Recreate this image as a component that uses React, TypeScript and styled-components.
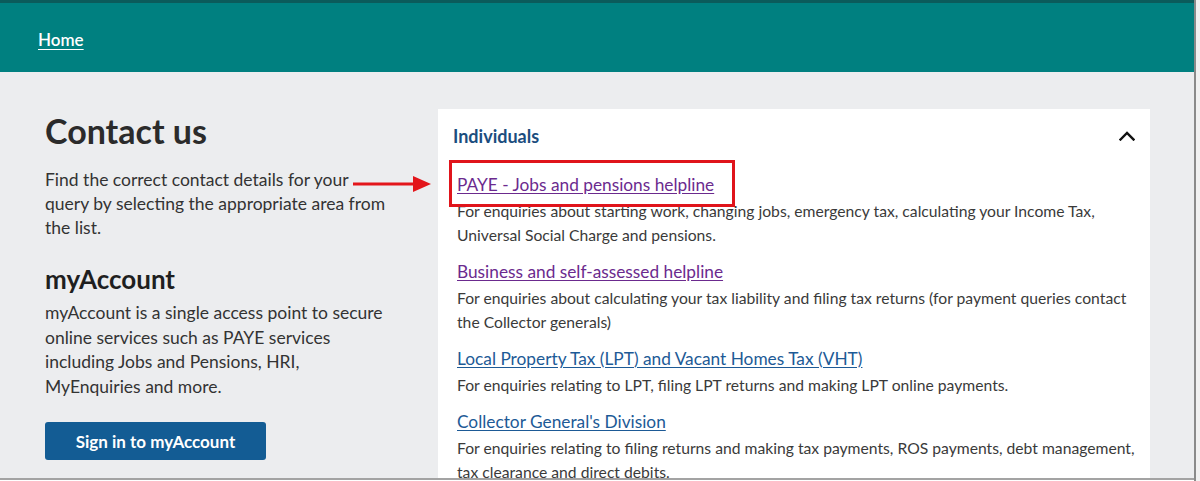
import { FC } from "react";
import styled, { createGlobalStyle } from "styled-components";

type HelpItem = {
  title: string;
  description: string;
  visited?: boolean;
  highlighted?: boolean;
};

const items: HelpItem[] = [
  {
    title: "PAYE - Jobs and pensions helpline",
    description:
      "For enquiries about starting work, changing jobs, emergency tax, calculating your Income Tax, Universal Social Charge and pensions.",
    visited: true,
    highlighted: true,
  },
  {
    title: "Business and self-assessed helpline",
    description:
      "For enquiries about calculating your tax liability and filing tax returns (for payment queries contact the Collector generals)",
    visited: true,
  },
  {
    title: "Local Property Tax (LPT) and Vacant Homes Tax (VHT)",
    description:
      "For enquiries relating to LPT, filing LPT returns and making LPT online payments.",
  },
  {
    title: "Collector General's Division",
    description:
      "For enquiries relating to filing returns and making tax payments, ROS payments, debt management, tax clearance and direct debits.",
  },
];

const ChevronUp: FC = () => (
  <svg width="16" height="10" viewBox="0 0 16 10" fill="none">
    <path
      d="M1.5 8.5 L8 2 L14.5 8.5"
      stroke="#111"
      strokeWidth="2.4"
      strokeLinecap="square"
    />
  </svg>
);

const Arrow: FC = () => (
  <ArrowWrap>
    <svg width="78" height="16" viewBox="0 0 78 16">
      <rect x="0" y="6.5" width="62" height="3" fill="#e3161b" />
      <polygon points="60,0 78,8 60,16" fill="#e3161b" />
    </svg>
  </ArrowWrap>
);

export default function App() {
  return (
    <Frame>
      <GlobalStyle />
      <Page>
        <Header>
          <HomeLink href="#">Home</HomeLink>
        </Header>
        <Main>
          <Intro>
            <Title>Contact us</Title>
            <Lead>
              Find the correct contact details for your query by selecting the
              appropriate area from the list.
            </Lead>
            <SubTitle>myAccount</SubTitle>
            <Body>
              myAccount is a single access point to secure online services such
              as PAYE services including Jobs and Pensions, HRI, MyEnquiries and
              more.
            </Body>
            <SignIn type="button">Sign in to myAccount</SignIn>
          </Intro>
          <Card>
            <Arrow />
            <CardHeader>
              <CardTitle>Individuals</CardTitle>
              <ChevronUp />
            </CardHeader>
            <List>
              {items.map((item) => (
                <Item key={item.title}>
                  {item.highlighted && <Highlight />}
                  <ItemLink href="#" $visited={item.visited}>
                    {item.title}
                  </ItemLink>
                  <ItemText>{item.description}</ItemText>
                </Item>
              ))}
            </List>
          </Card>
        </Main>
      </Page>
      <Scrollbar />
    </Frame>
  );
}

const GlobalStyle = createGlobalStyle`
  body {
    margin: 0;
    background: #ffffff;
    font-family: Lato, "Open Sans", Arial, sans-serif;
    color: #333333;
  }
`;

const Frame = styled.div`
  display: flex;
  height: 481px;
  overflow: hidden;
`;

const Page = styled.div`
  flex: 1;
  height: 478px;
  overflow: hidden;
  background: #ecedef;
  border-bottom: 2px solid #a3a3a3;
`;

const Scrollbar = styled.div`
  width: 6px;
  background: #f1f1f1;
  border-left: 2px solid #8a8a8a;
  box-sizing: border-box;
`;

const Header = styled.header`
  height: 69px;
  background: #008080;
  border-top: 3px solid #0b5b5b;
  display: flex;
  align-items: center;
  padding-left: 38px;
`;

const HomeLink = styled.a`
  color: #ffffff;
  font-size: 17px;
  font-weight: 600;
  text-decoration: underline;
  text-underline-offset: 3px;
  margin-top: 3px;
`;

const Main = styled.main`
  display: flex;
  align-items: flex-start;
  gap: 48px;
  padding: 37px 0 0 45px;
`;

const Intro = styled.section`
  width: 345px;
  flex-shrink: 0;
`;

const Title = styled.h1`
  margin: 0;
  font-size: 34px;
  line-height: 44px;
  font-weight: 700;
  color: #2b2b2b;
`;

const Lead = styled.p`
  margin: 15px 0 0;
  font-size: 17.5px;
  line-height: 24px;
`;

const SubTitle = styled.h2`
  margin: 23px 0 0;
  font-size: 26px;
  line-height: 32px;
  font-weight: 700;
  color: #1f1f1f;
`;

const Body = styled.p`
  margin: 6px 0 0;
  font-size: 17.5px;
  line-height: 24.5px;
`;

const SignIn = styled.button`
  margin-top: 23px;
  width: 221px;
  height: 38px;
  border: none;
  border-radius: 3px;
  background: #135c94;
  color: #ffffff;
  font-family: inherit;
  font-size: 17px;
  font-weight: 700;
  cursor: pointer;
`;

const Card = styled.section`
  position: relative;
  width: 712px;
  height: 400px;
  background: #ffffff;
  box-sizing: border-box;
  padding: 16px 15px 0;
`;

const ArrowWrap = styled.div`
  position: absolute;
  left: -85px;
  top: 67px;
  line-height: 0;
`;

const CardHeader = styled.div`
  display: flex;
  justify-content: space-between;
  align-items: center;
`;

const CardTitle = styled.h3`
  margin: 0;
  font-size: 18px;
  line-height: 22px;
  font-weight: 700;
  color: #1b4d7e;
`;

const List = styled.div`
  display: flex;
  flex-direction: column;
  gap: 13px;
  margin-top: 26px;
  padding-left: 4px;
`;

const Item = styled.div`
  position: relative;
`;

const Highlight = styled.div`
  position: absolute;
  left: -8px;
  top: -13px;
  width: 286px;
  height: 47px;
  box-sizing: border-box;
  border: 3px solid #e0141b;
`;

const ItemLink = styled.a<{ $visited?: boolean }>`
  display: block;
  width: fit-content;
  font-size: 17.3px;
  line-height: 24px;
  color: ${(p) => (p.$visited ? "#6b2a8e" : "#1d5a96")};
  text-decoration: underline;
  text-underline-offset: 2px;
`;

const ItemText = styled.p`
  margin: 2px 0 0;
  font-size: 15.7px;
  line-height: 24px;
  color: #3a3a3a;
`;
